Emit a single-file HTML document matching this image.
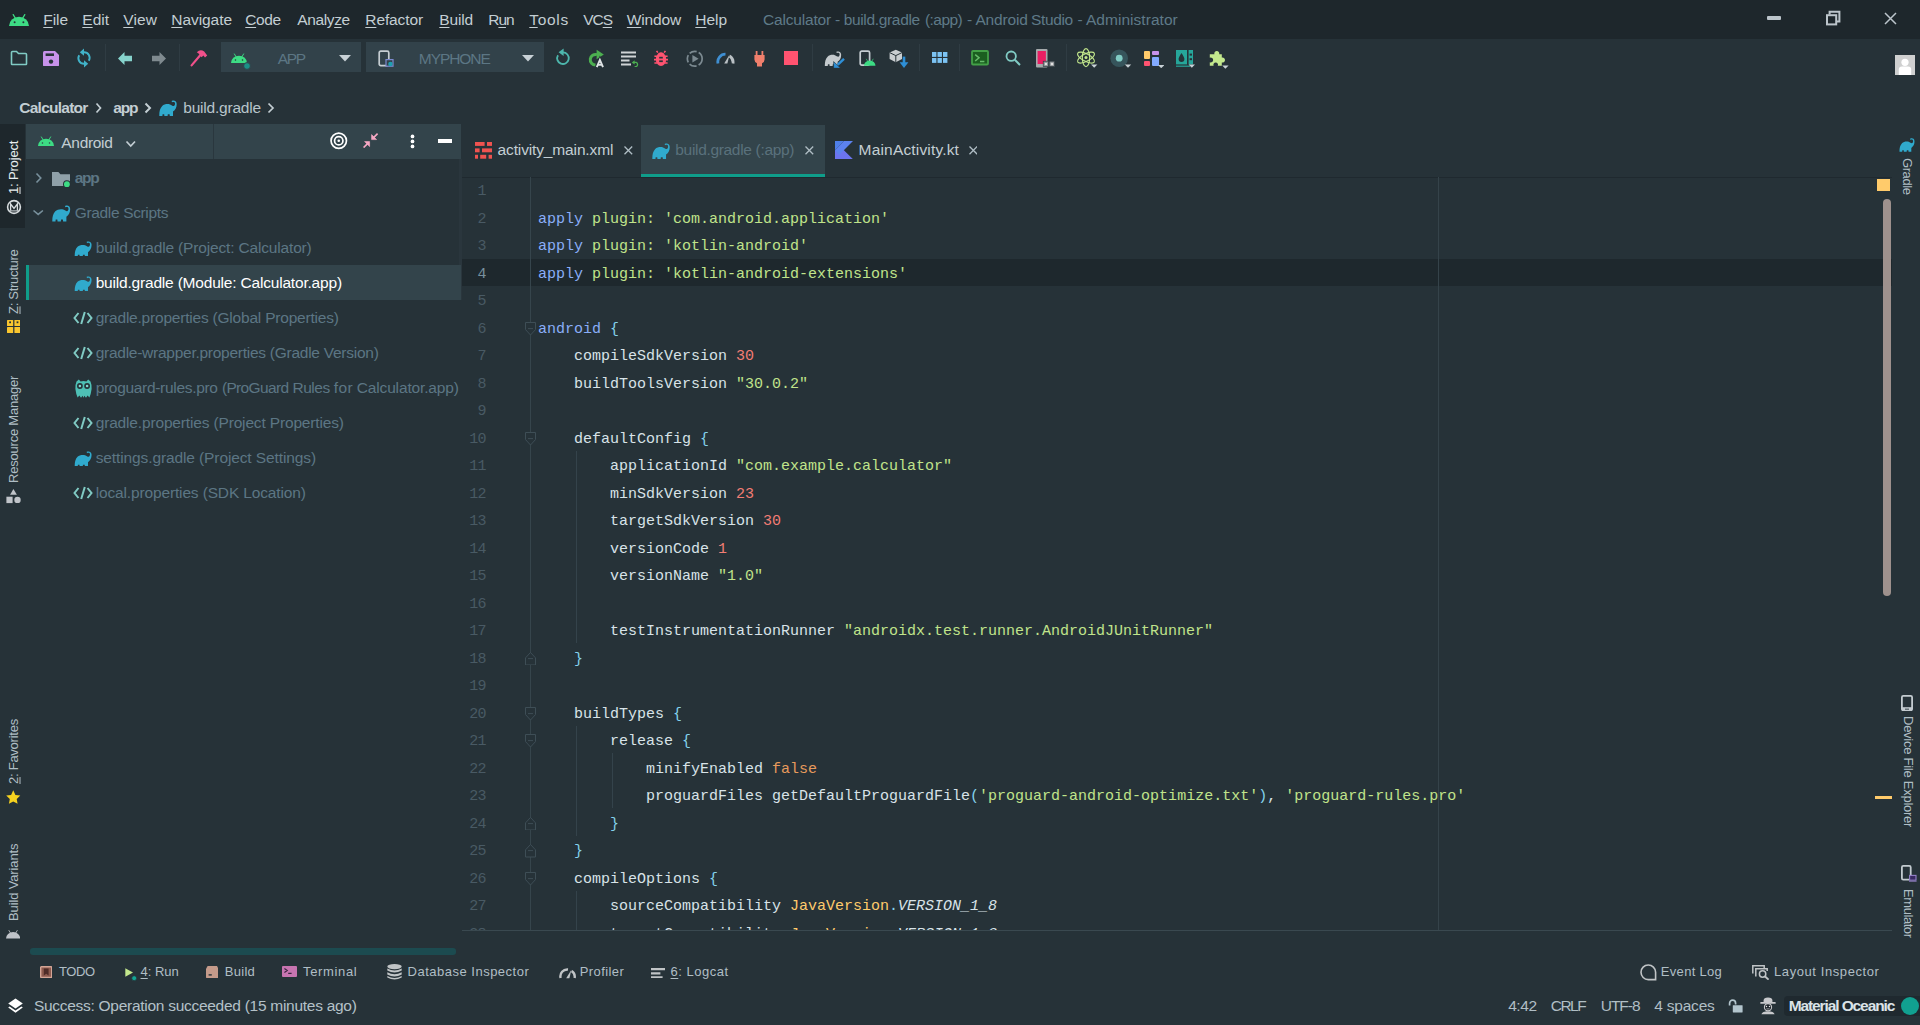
<!DOCTYPE html><html><head><meta charset="utf-8"><title>Calculator - build.gradle (:app) - Android Studio</title><style>
html,body{margin:0;padding:0}body{width:1920px;height:1025px;overflow:hidden;background:#263238;position:relative;font-family:"Liberation Sans",sans-serif}
#root{position:absolute;left:0;top:0;width:1920px;height:1025px;overflow:hidden}
#root>div,#root>svg,#root>span,.ed>div,.ed>span,.ed>svg{position:absolute}
.t{white-space:pre;display:block}
u{text-decoration:underline;text-underline-offset:1.5px;text-decoration-thickness:1px}
.ed{position:absolute;overflow:hidden}
</style></head><body><div id="root">
<div style="left:0px;top:0px;width:1920px;height:39px;background:#1e272c;"></div>
<div style="left:0px;top:124px;width:25px;height:104px;background:#1e272c;"></div>
<div style="left:26px;top:124px;width:435px;height:35px;background:#33444b;"></div>
<div style="left:213px;top:124px;width:1px;height:35px;background:#2a373e;"></div>
<div style="left:459px;top:159px;width:3px;height:141px;background:#2a363d;"></div>
<div style="left:27px;top:265px;width:434px;height:35px;background:#33444b;"></div>
<div style="left:26px;top:265px;width:3px;height:35px;background:#0f9d8a;"></div>
<div style="left:30px;top:948px;width:426px;height:7px;background:#1c4b50;border-radius:3px"></div>
<div style="left:221px;top:42px;width:140px;height:30px;background:#32424a;"></div>
<div style="left:366px;top:42px;width:178px;height:30px;background:#32424a;"></div>
<div style="left:641px;top:125px;width:184px;height:52px;background:#33444b;"></div>
<div style="left:641px;top:173.5px;width:184px;height:3.5px;background:#0f9d8a;"></div>
<div style="left:462px;top:176.5px;width:1430px;height:1px;background:#1f292f;"></div>
<div style="left:1783.5px;top:996.3px;width:137px;height:19.5px;background:#1f292f;border-radius:4px 0 0 4px"></div>
<div style="left:1901px;top:997px;width:18px;height:18px;background:#11a090;border-radius:50%"></div>
<div style="left:104.5px;top:44px;width:1px;height:27px;background:#2f3c43;"></div>
<div style="left:178.5px;top:44px;width:1px;height:27px;background:#2f3c43;"></div>
<div style="left:811.5px;top:44px;width:1px;height:27px;background:#2f3c43;"></div>
<div style="left:918.5px;top:44px;width:1px;height:27px;background:#2f3c43;"></div>
<div style="left:959px;top:44px;width:1px;height:27px;background:#2f3c43;"></div>
<div style="left:1065.5px;top:44px;width:1px;height:27px;background:#2f3c43;"></div>
<svg style="left:9px;top:14px" width="20" height="12" viewBox="0 0 20 12"><path d="M0 12 A10 9.2 0 0 1 20 12 Z" fill="#3ddc84"/><path d="M4.2 0.6 L6.6 4.6 M15.8 0.6 L13.4 4.6" stroke="#3ddc84" stroke-width="1.2" stroke-linecap="round"/><circle cx="5.6" cy="8.2" r="1" fill="#263238"/><circle cx="14.4" cy="8.2" r="1" fill="#263238"/></svg>
<div style="left:1767px;top:16px;width:14px;height:4px;background:#bcc5cb;border-radius:1px"></div>
<svg style="left:1825px;top:10px" width="16" height="16" viewBox="0 0 16 16"><path d="M4.6 4.6 V1.8 H14.4 V11.4 H11.6" fill="none" stroke="#bcc5cb" stroke-width="2"/><rect x="2" y="5.2" width="9.2" height="9.2" fill="none" stroke="#bcc5cb" stroke-width="2"/></svg>
<svg style="left:1884px;top:11.5px" width="13" height="13" viewBox="0 0 13 13"><path d="M1 1 L12 12 M12 1 L1 12" stroke="#bcc5cb" stroke-width="1.5"/></svg>
<div style="left:1895px;top:55px;width:20px;height:20px;background:#cfd0d0;"></div>
<svg style="left:1895px;top:55px" width="20" height="20" viewBox="0 0 20 20"><circle cx="10" cy="7.3" r="3.6" fill="#fff"/><path d="M3.8 20 V14.5 Q3.8 11.5 7 11.5 H13 Q16.2 11.5 16.2 14.5 V20 Z" fill="#fff"/></svg>
<svg style="left:10px;top:50px" width="18" height="16" viewBox="0 0 18 16"><path d="M1.5 14 V2.5 Q1.5 1.5 2.5 1.5 H6.5 L8.5 3.5 H15.5 Q16.5 3.5 16.5 4.5 V14 Q16.5 14.5 16 14.5 H2 Q1.5 14.5 1.5 14 Z" fill="none" stroke="#80cbc4" stroke-width="1.6"/></svg>
<svg style="left:43px;top:50.5px" width="16" height="15.5" viewBox="0 0 16 15.5"><path d="M0 1.5 Q0 0 1.5 0 H12 L16 4 V14 Q16 15.5 14.5 15.5 H1.5 Q0 15.5 0 14 Z" fill="#c792ea"/><rect x="2.6" y="2.4" width="8.4" height="2.6" fill="#263238"/><circle cx="8" cy="10.6" r="2.2" fill="#263238"/></svg>
<svg style="left:76px;top:48px" width="16" height="20" viewBox="0 0 16 20"><path d="M8 4.2 A5.6 5.6 0 0 1 12.8 12.7 M8 15.8 A5.6 5.6 0 0 1 3.2 7.3" fill="none" stroke="#41b3c9" stroke-width="1.9"/><path d="M8 0.6 V7.8 L3.8 4.2 Z M8 19.4 V12.2 L12.2 15.8 Z" fill="#41b3c9"/></svg>
<svg style="left:118px;top:51.5px" width="15" height="13" viewBox="0 0 15 13"><path d="M0 6.5 L6.5 0 V3.8 H14 V9.2 H6.5 V13 Z" fill="#86d3cc"/></svg>
<svg style="left:150.5px;top:51.5px" width="15" height="13" viewBox="0 0 15 13"><path d="M15 6.5 L8.5 0 V3.8 H1 V9.2 H8.5 V13 Z" fill="#7f8a8f"/></svg>
<svg style="left:190px;top:49px" width="18" height="18" viewBox="0 0 18 18"><path d="M1.6 16.4 L10.2 6.2" stroke="#f0508a" stroke-width="2.2" stroke-linecap="round"/><path d="M6.8 3.2 Q10.5 -0.2 14.2 2.6 L17.2 6.4 L15 8.4 L13.4 6.6 L11.6 8.2 L8.6 4.6 Z" fill="#f0508a"/></svg>
<svg style="left:231px;top:52.5px" width="16" height="10.5" viewBox="0 0 20 12"><path d="M0 12 A10 9.2 0 0 1 20 12 Z" fill="#3ddc84"/><path d="M4.2 0.6 L6.6 4.6 M15.8 0.6 L13.4 4.6" stroke="#3ddc84" stroke-width="1.2" stroke-linecap="round"/><circle cx="5.6" cy="8.2" r="1" fill="#263238"/><circle cx="14.4" cy="8.2" r="1" fill="#263238"/></svg>
<svg style="left:242.5px;top:62px" width="8" height="8" viewBox="0 0 8 8"><circle cx="4" cy="4" r="3.4" fill="#1c8f86" stroke="#32424a" stroke-width="1"/></svg>
<svg style="left:339px;top:55px" width="12" height="6.5" viewBox="0 0 12 6.5"><path d="M0 0 H12 L6.0 6.5 Z" fill="#c8d1d6"/></svg>
<svg style="left:378px;top:50px" width="16" height="18" viewBox="0 0 16 18"><rect x="1.2" y="1.2" width="9.6" height="14.4" rx="1.6" fill="none" stroke="#c5cdd2" stroke-width="1.7"/><rect x="8" y="9.6" width="7" height="6.6" fill="#32424a" stroke="#7d8bd0" stroke-width="1.2"/><circle cx="12.4" cy="14" r="2.2" fill="#1f9fb0"/></svg>
<svg style="left:522px;top:55px" width="12" height="6.5" viewBox="0 0 12 6.5"><path d="M0 0 H12 L6.0 6.5 Z" fill="#c8d1d6"/></svg>
<svg style="left:555px;top:48px" width="16" height="18" viewBox="0 0 16 18"><path d="M8 4.4 A5.8 5.8 0 1 1 3 7.2" fill="none" stroke="#4db6ac" stroke-width="1.8"/><path d="M8.6 0.6 V8 L3.6 4.3 Z" fill="#4db6ac"/></svg>
<svg style="left:587px;top:48.5px" width="18" height="19" viewBox="0 0 18 19"><path d="M10 5.6 A5.3 5.3 0 1 0 8.6 16" fill="none" stroke="#4caf50" stroke-width="3"/><path d="M9.6 0.8 L16.8 5.6 L9.6 10.2 Z" fill="#4caf50"/><path d="M9.8 18.2 L12.9 11 L16 18.2 M11 15.9 H14.8" fill="none" stroke="#263238" stroke-width="3.6"/><path d="M9.8 18.2 L12.9 11 L16 18.2 M11 15.9 H14.8" fill="none" stroke="#dfe4e6" stroke-width="1.9"/></svg>
<svg style="left:621px;top:51px" width="19" height="16" viewBox="0 0 19 16"><path d="M0 1.5 H15 M0 5.5 H15 M0 9.5 H8.5 M0 13.5 H10" stroke="#cfd3d5" stroke-width="2.2"/><path d="M12.4 11.4 H15.2 A2.3 2.3 0 0 1 15.2 15.6 H13.6" fill="none" stroke="#4caf50" stroke-width="1.3"/><path d="M13.6 9.2 L10.8 11.4 L13.6 13.6 Z" fill="#4caf50"/></svg>
<svg style="left:653px;top:50px" width="16" height="16.5" viewBox="0 0 16 16.5"><ellipse cx="8" cy="9.4" rx="5.2" ry="6.6" fill="#ff5370"/><path d="M4.2 4.4 Q8 0.2 11.8 4.4 Z" fill="#ff5370"/><path d="M1.4 6.2 H4 M12 6.2 H14.6 M1 9.6 H4 M12 9.6 H15 M1.4 13 H4 M12 13 H14.6 M4.8 2.6 L3.6 0.9 M11.2 2.6 L12.4 0.9" stroke="#ff5370" stroke-width="1.6"/><rect x="6.2" y="6.8" width="3.6" height="1.7" fill="#263238"/><rect x="6.2" y="10.4" width="3.6" height="1.7" fill="#263238"/></svg>
<svg style="left:685.5px;top:49.5px" width="17.5" height="17.5" viewBox="0 0 17.5 17.5"><circle cx="8.75" cy="8.75" r="7.4" fill="none" stroke="#7c8a91" stroke-width="1.7" stroke-dasharray="7.5 2.2"/><path d="M6.4 5 L12.6 8.75 L6.4 12.5 Z" fill="#7c8a91"/></svg>
<svg style="left:716px;top:51.5px" width="19" height="12" viewBox="0 0 19 12"><path d="M2 11.5 A7.6 7.6 0 0 1 9.5 2.2" fill="none" stroke="#3f8fd2" stroke-width="2.8"/><path d="M13.6 4 A7.6 7.6 0 0 1 17 11.5" fill="none" stroke="#b9c0c4" stroke-width="2.8"/><path d="M8.2 11.5 L13.6 2.4 L11.4 11.5 Z" fill="#b9c0c4"/></svg>
<svg style="left:753.5px;top:50.5px" width="11" height="16" viewBox="0 0 11 16"><path d="M2.6 0 V4.4 M8.4 0 V4.4" stroke="#f07f6c" stroke-width="1.8"/><path d="M0.4 4 H10.6 V8.6 Q10.6 11 8 12.2 V15.6 H3 V12.2 Q0.4 11 0.4 8.6 Z" fill="#f07f6c"/></svg>
<div style="left:784.3px;top:51.3px;width:13.8px;height:13.8px;background:#ff5370;"></div>
<svg style="left:823.5px;top:50.5px" width="18" height="15" viewBox="0 0 18 16"><path d="M0.3 16 C0.2 12 0.8 8.5 3.2 6 C5 4.2 8.5 3.6 11 4.4 C12.5 5 13.5 6 14.6 6 C15.6 6 16.2 4.6 16 3.2 C15.8 1.9 14.8 1.5 13 2.2 L12.6 0.9 C15 -0.2 17.2 0.6 17.6 3.2 C18 6.5 16.8 9.5 14 11.5 L14 16 L10.8 16 L10.6 14.2 L8.8 14.2 L8.6 16 L5.4 16 L5.2 14.2 L3.6 14.2 L3.4 16 Z" fill="#c4cacd"/></svg>
<svg style="left:832.5px;top:57.5px" width="12" height="10.5" viewBox="0 0 12 10.5"><path d="M11 0.8 L4.6 6.8" stroke="#2e8fd6" stroke-width="2.4"/><path d="M0.6 10.2 V3.6 L7.6 10.2 Z" fill="#2e8fd6" stroke="#263238" stroke-width="0.6"/></svg>
<svg style="left:858.5px;top:50px" width="17" height="18" viewBox="0 0 17 18"><rect x="1.2" y="1.2" width="9.4" height="14" rx="1.6" fill="none" stroke="#c5cdd2" stroke-width="1.7"/></svg>
<svg style="left:864px;top:58px" width="11.5" height="8.5" viewBox="0 0 20 12"><path d="M0 12 A10 9.2 0 0 1 20 12 Z" fill="#3ddc84"/><path d="M4.2 0.6 L6.6 4.6 M15.8 0.6 L13.4 4.6" stroke="#3ddc84" stroke-width="1.2" stroke-linecap="round"/><circle cx="5.6" cy="8.2" r="1" fill="#3ddc84"/><circle cx="14.4" cy="8.2" r="1" fill="#3ddc84"/></svg>
<svg style="left:888.5px;top:48.5px" width="20" height="20" viewBox="0 0 20 20"><path d="M6.8 0.8 L13 3.6 V10 L6.8 13.2 L0.6 10 V3.6 Z" fill="#c9ced1"/><path d="M0.6 3.6 L6.8 6.6 L13 3.6 M6.8 6.6 V13.2" fill="none" stroke="#263238" stroke-width="1"/><path d="M15 7.6 V14" stroke="#2e8fd6" stroke-width="2.6"/><path d="M10.6 13.2 H19.4 L15 19 Z" fill="#2e8fd6"/></svg>
<svg style="left:932px;top:52px" width="15.5" height="11" viewBox="0 0 15.5 11"><g fill="#7cc3f3"><rect x="0" y="0" width="4.4" height="4.9"/><rect x="5.5" y="0" width="4.4" height="4.9"/><rect x="11" y="0" width="4.4" height="4.9"/><rect x="0" y="6" width="4.4" height="4.9"/><rect x="5.5" y="6" width="4.4" height="4.9"/><rect x="11" y="6" width="4.4" height="4.9"/></g></svg>
<svg style="left:971px;top:50px" width="18" height="15.5" viewBox="0 0 18 15.5"><rect x="1" y="1" width="16" height="13.5" rx="1" fill="#1b5e20" stroke="#43a047" stroke-width="1.8"/><path d="M4.2 4.6 L8 7.8 L4.2 11 M9 11.4 H13.4" fill="none" stroke="#66bb6a" stroke-width="1.5"/></svg>
<svg style="left:1005px;top:50px" width="16" height="16" viewBox="0 0 16 16"><circle cx="6.2" cy="6.2" r="4.7" fill="none" stroke="#80cbc4" stroke-width="1.8"/><path d="M9.8 9.8 L15 15" stroke="#80cbc4" stroke-width="2"/></svg>
<svg style="left:1034.5px;top:47.5px" width="21" height="21" viewBox="0 0 21 21"><rect x="1" y="1" width="11.5" height="18.6" rx="1" fill="#a5a9ab"/><rect x="2.6" y="3" width="8.3" height="13" fill="#e91e63"/><rect x="8.2" y="13.2" width="5.4" height="5.4" fill="#8f9497" stroke="#263238" stroke-width="0.6"/><rect x="14.2" y="13.2" width="5.4" height="5.4" fill="#8f9497" stroke="#263238" stroke-width="0.6"/><circle cx="10.9" cy="16" r="1.2" fill="#e0e0e0"/><rect x="15.8" y="14.8" width="2.4" height="2.4" fill="#e0e0e0"/></svg>
<svg style="left:1076px;top:48px" width="22" height="20" viewBox="0 0 22 20"><g fill="none" stroke="#c3e88d" stroke-width="1.15"><ellipse cx="10" cy="9.6" rx="9.4" ry="3.7" transform="rotate(-28 10 9.6)"/><ellipse cx="10" cy="9.6" rx="9.4" ry="3.7" transform="rotate(28 10 9.6)"/><ellipse cx="10" cy="9.6" rx="3.7" ry="9" /></g><circle cx="10" cy="9.6" r="1.5" fill="#c3e88d"/><path d="M15 16.6 H21.4 L18.2 19.8 Z" fill="#c8d1d6"/></svg>
<svg style="left:1110px;top:49px" width="22" height="20" viewBox="0 0 22 20"><circle cx="9.2" cy="9.2" r="8.8" fill="#36545b"/><circle cx="9.2" cy="9.2" r="3.4" fill="#80cbc4"/><path d="M14.8 15.6 H21.2 L18 18.8 Z" fill="#c8d1d6"/></svg>
<div style="left:1143.8px;top:50.6px;width:6.6px;height:8.8px;background:#ffcb6b;border-radius:1px"></div>
<div style="left:1152.2px;top:50.6px;width:6.4px;height:4.6px;background:#c792ea;border-radius:1px"></div>
<div style="left:1143.8px;top:60.6px;width:6.6px;height:5.4px;background:#ff5370;border-radius:1px"></div>
<div style="left:1152.2px;top:57px;width:6.4px;height:9px;background:#82aaff;border-radius:1px"></div>
<svg style="left:1157.5px;top:64.6px" width="6.4" height="3.2" viewBox="0 0 6.4 3.2"><path d="M0 0 H6.4 L3.2 3.2 Z" fill="#c8d1d6"/></svg>
<svg style="left:1175.5px;top:50px" width="22" height="20" viewBox="0 0 22 20"><rect x="0" y="0" width="11" height="14.4" fill="#26a69a"/><rect x="12.6" y="0" width="4.4" height="14.4" fill="#26a69a"/><path d="M5.5 3 Q8.4 7.4 8.4 9 A2.9 2.9 0 0 1 2.6 9 Q2.6 7.4 5.5 3 Z" fill="#263238"/><rect x="13.6" y="3.6" width="2.4" height="2" fill="#263238"/><rect x="13.6" y="8.2" width="2.4" height="2" fill="#263238"/><path d="M0 16.2 H14" stroke="#26a69a" stroke-width="1.2"/><path d="M12.6 14.6 H19 L15.8 17.8 Z" fill="#c8d1d6"/></svg>
<svg style="left:1206.5px;top:48.5px" width="22" height="20" viewBox="0 0 22 20"><path d="M5 5.2 H7.4 A2.5 2.5 0 1 1 12.2 5.2 H14.8 V8.6 A2.5 2.5 0 1 1 14.8 13.4 V16.8 H10.8 A2.3 2.3 0 1 0 6.6 16.8 H2.8 V13.2 A2.4 2.4 0 1 0 2.8 8.8 V5.2 Z" fill="#c3e88d"/><path d="M15.2 16.6 H21.6 L18.4 19.8 Z" fill="#c8d1d6"/></svg>
<svg style="left:95px;top:102px" width="7.5" height="12" viewBox="0 0 7.5 12"><path d="M1.5 1.5 L5.5 6.0 L1.5 10.5" fill="none" stroke="#c3ced3" stroke-width="1.7"/></svg>
<svg style="left:143.5px;top:102px" width="8" height="12" viewBox="0 0 8 12"><path d="M1.5 1.5 L6 6.0 L1.5 10.5" fill="none" stroke="#c3ced3" stroke-width="2"/></svg>
<svg style="left:159.2px;top:100px" width="18" height="16.1" viewBox="0 0 18 16"><path d="M0.3 16 C0.2 12 0.8 8.5 3.2 6 C5 4.2 8.5 3.6 11 4.4 C12.5 5 13.5 6 14.6 6 C15.6 6 16.2 4.6 16 3.2 C15.8 1.9 14.8 1.5 13 2.2 L12.6 0.9 C15 -0.2 17.2 0.6 17.6 3.2 C18 6.5 16.8 9.5 14 11.5 L14 16 L10.8 16 L10.6 14.2 L8.8 14.2 L8.6 16 L5.4 16 L5.2 14.2 L3.6 14.2 L3.4 16 Z" fill="#30aacd"/></svg>
<svg style="left:266.5px;top:102px" width="8" height="12" viewBox="0 0 8 12"><path d="M1.5 1.5 L6 6.0 L1.5 10.5" fill="none" stroke="#c3ced3" stroke-width="1.7"/></svg>
<svg style="left:38px;top:135.7px" width="16" height="10.5" viewBox="0 0 20 12"><path d="M0 12 A10 9.2 0 0 1 20 12 Z" fill="#3ddc84"/><path d="M4.2 0.6 L6.6 4.6 M15.8 0.6 L13.4 4.6" stroke="#3ddc84" stroke-width="1.2" stroke-linecap="round"/><circle cx="5.6" cy="8.2" r="1" fill="#32424a"/><circle cx="14.4" cy="8.2" r="1" fill="#32424a"/></svg>
<svg style="left:124.5px;top:139.5px" width="11.5" height="8" viewBox="0 0 11.5 8"><path d="M1.5 1.5 L5.75 6 L10.0 1.5" fill="none" stroke="#c3ced3" stroke-width="1.7"/></svg>
<svg style="left:330px;top:132.2px" width="17.5" height="17.5" viewBox="0 0 17.5 17.5"><circle cx="8.75" cy="8.75" r="7.7" fill="none" stroke="#fff" stroke-width="1.7"/><circle cx="8.75" cy="8.75" r="4.2" fill="none" stroke="#fff" stroke-width="1.7"/><circle cx="8.75" cy="8.75" r="1.3" fill="#fff"/></svg>
<svg style="left:363.4px;top:133.2px" width="15.2" height="15.2" viewBox="0 0 15.2 15.2"><g fill="#f7a8c4" stroke="#f7a8c4"><path d="M14.6 0.6 L10.6 4.6" stroke-width="1.6" fill="none"/><path d="M8.6 1.6 V6.6 H13.6 Z" stroke-width="0.6"/><path d="M0.6 14.6 L4.6 10.6" stroke-width="1.6" fill="none"/><path d="M6.6 13.6 V8.6 H1.6 Z" stroke-width="0.6"/></g></svg>
<svg style="left:410.4px;top:133.6px" width="5" height="5" viewBox="0 0 5 5"><circle cx="2.5" cy="2.4" r="1.85" fill="#fff"/></svg>
<svg style="left:410.4px;top:138.65px" width="5" height="5" viewBox="0 0 5 5"><circle cx="2.5" cy="2.4" r="1.85" fill="#fff"/></svg>
<svg style="left:410.4px;top:143.7px" width="5" height="5" viewBox="0 0 5 5"><circle cx="2.5" cy="2.4" r="1.85" fill="#fff"/></svg>
<div style="left:438px;top:139.2px;width:14px;height:3.6px;background:#fff;"></div>
<svg style="left:34.8px;top:171.6px" width="7.8" height="12" viewBox="0 0 7.8 12"><path d="M1.5 1.5 L5.8 6.0 L1.5 10.5" fill="none" stroke="#78909c" stroke-width="1.6"/></svg>
<svg style="left:52px;top:171.5px" width="20" height="16" viewBox="0 0 20 16"><path d="M0 0 H6.4 L8.4 2.2 H18 V14 H0 Z" fill="#8fa0a8"/><circle cx="14.9" cy="12.2" r="3.9" fill="#263238"/><circle cx="14.9" cy="12.2" r="2.9" fill="#3ddc84"/></svg>
<svg style="left:32.3px;top:209px" width="12.4" height="7.4" viewBox="0 0 12.4 7.4"><path d="M1.5 1.5 L6.2 5.4 L10.9 1.5" fill="none" stroke="#78909c" stroke-width="1.6"/></svg>
<svg style="left:52px;top:205px" width="18.5" height="16.5" viewBox="0 0 18 16"><path d="M0.3 16 C0.2 12 0.8 8.5 3.2 6 C5 4.2 8.5 3.6 11 4.4 C12.5 5 13.5 6 14.6 6 C15.6 6 16.2 4.6 16 3.2 C15.8 1.9 14.8 1.5 13 2.2 L12.6 0.9 C15 -0.2 17.2 0.6 17.6 3.2 C18 6.5 16.8 9.5 14 11.5 L14 16 L10.8 16 L10.6 14.2 L8.8 14.2 L8.6 16 L5.4 16 L5.2 14.2 L3.6 14.2 L3.4 16 Z" fill="#30aacd"/></svg>
<svg style="left:73.6px;top:240.5px" width="18.3" height="15.5" viewBox="0 0 18 16"><path d="M0.3 16 C0.2 12 0.8 8.5 3.2 6 C5 4.2 8.5 3.6 11 4.4 C12.5 5 13.5 6 14.6 6 C15.6 6 16.2 4.6 16 3.2 C15.8 1.9 14.8 1.5 13 2.2 L12.6 0.9 C15 -0.2 17.2 0.6 17.6 3.2 C18 6.5 16.8 9.5 14 11.5 L14 16 L10.8 16 L10.6 14.2 L8.8 14.2 L8.6 16 L5.4 16 L5.2 14.2 L3.6 14.2 L3.4 16 Z" fill="#30aacd"/></svg>
<svg style="left:73.6px;top:275.5px" width="18.3" height="15.5" viewBox="0 0 18 16"><path d="M0.3 16 C0.2 12 0.8 8.5 3.2 6 C5 4.2 8.5 3.6 11 4.4 C12.5 5 13.5 6 14.6 6 C15.6 6 16.2 4.6 16 3.2 C15.8 1.9 14.8 1.5 13 2.2 L12.6 0.9 C15 -0.2 17.2 0.6 17.6 3.2 C18 6.5 16.8 9.5 14 11.5 L14 16 L10.8 16 L10.6 14.2 L8.8 14.2 L8.6 16 L5.4 16 L5.2 14.2 L3.6 14.2 L3.4 16 Z" fill="#30aacd"/></svg>
<svg style="left:73.6px;top:450.5px" width="18.3" height="15.5" viewBox="0 0 18 16"><path d="M0.3 16 C0.2 12 0.8 8.5 3.2 6 C5 4.2 8.5 3.6 11 4.4 C12.5 5 13.5 6 14.6 6 C15.6 6 16.2 4.6 16 3.2 C15.8 1.9 14.8 1.5 13 2.2 L12.6 0.9 C15 -0.2 17.2 0.6 17.6 3.2 C18 6.5 16.8 9.5 14 11.5 L14 16 L10.8 16 L10.6 14.2 L8.8 14.2 L8.6 16 L5.4 16 L5.2 14.2 L3.6 14.2 L3.4 16 Z" fill="#30aacd"/></svg>
<svg style="left:72.6px;top:311px" width="20" height="14" viewBox="0 0 20 14"><path d="M5.5 2 L1.5 7 L5.5 12 M14.5 2 L18.5 7 L14.5 12 M11.8 1 L8.2 13" fill="none" stroke="#80cbc4" stroke-width="2"/></svg>
<svg style="left:72.6px;top:346px" width="20" height="14" viewBox="0 0 20 14"><path d="M5.5 2 L1.5 7 L5.5 12 M14.5 2 L18.5 7 L14.5 12 M11.8 1 L8.2 13" fill="none" stroke="#80cbc4" stroke-width="2"/></svg>
<svg style="left:72.6px;top:416px" width="20" height="14" viewBox="0 0 20 14"><path d="M5.5 2 L1.5 7 L5.5 12 M14.5 2 L18.5 7 L14.5 12 M11.8 1 L8.2 13" fill="none" stroke="#80cbc4" stroke-width="2"/></svg>
<svg style="left:72.6px;top:486px" width="20" height="14" viewBox="0 0 20 14"><path d="M5.5 2 L1.5 7 L5.5 12 M14.5 2 L18.5 7 L14.5 12 M11.8 1 L8.2 13" fill="none" stroke="#80cbc4" stroke-width="2"/></svg>
<svg style="left:74.8px;top:378.5px" width="17" height="19" viewBox="0 0 17 19"><path d="M1.5 2.5 L3.8 0.6 L5.6 2.4 Q8.5 1.6 11.4 2.4 L13.2 0.6 L15.5 2.5 Q17 6 16.6 10 Q16 15 14.4 18.6 L12.6 16.6 L11 18.8 L9.4 16.8 L8.5 18.8 L7.6 16.8 L6 18.8 L4.4 16.6 L2.6 18.6 Q1 15 0.4 10 Q0 6 1.5 2.5 Z" fill="#4ec0b5"/><circle cx="4.9" cy="7" r="2.9" fill="#263238"/><circle cx="12.1" cy="7" r="2.9" fill="#263238"/><circle cx="4.9" cy="7" r="1.3" fill="#7fd6cd"/><circle cx="12.1" cy="7" r="1.3" fill="#7fd6cd"/></svg>
<svg style="left:474.5px;top:141.6px" width="17" height="17" viewBox="0 0 17 17"><g fill="#ef5350"><rect x="0" y="0" width="9.6" height="3.9"/><rect x="12" y="0" width="5" height="3.9"/><rect x="0" y="6.4" width="4.6" height="3.9"/><rect x="7" y="6.4" width="10" height="3.9"/><rect x="0" y="12.8" width="3" height="3.9"/><rect x="5.2" y="12.8" width="6" height="3.9"/><rect x="13.6" y="12.8" width="3.4" height="3.9"/></g></svg>
<svg style="left:624px;top:146px" width="8.7" height="8.7" viewBox="0 0 8.7 8.7"><path d="M0.5 0.5 L8.2 8.2 M8.2 0.5 L0.5 8.2" stroke="#b0bec5" stroke-width="1.3"/></svg>
<svg style="left:651.9px;top:142.5px" width="18.1" height="16" viewBox="0 0 18 16"><path d="M0.3 16 C0.2 12 0.8 8.5 3.2 6 C5 4.2 8.5 3.6 11 4.4 C12.5 5 13.5 6 14.6 6 C15.6 6 16.2 4.6 16 3.2 C15.8 1.9 14.8 1.5 13 2.2 L12.6 0.9 C15 -0.2 17.2 0.6 17.6 3.2 C18 6.5 16.8 9.5 14 11.5 L14 16 L10.8 16 L10.6 14.2 L8.8 14.2 L8.6 16 L5.4 16 L5.2 14.2 L3.6 14.2 L3.4 16 Z" fill="#30aacd"/></svg>
<svg style="left:805.3px;top:146px" width="8.7" height="8.7" viewBox="0 0 8.7 8.7"><path d="M0.5 0.5 L8.2 8.2 M8.2 0.5 L0.5 8.2" stroke="#b0bec5" stroke-width="1.3"/></svg>
<svg style="left:835px;top:140.7px" width="18" height="18.3" viewBox="0 0 18 18.3"><path d="M0 0 H9 L0 9.2 Z" fill="#4f7fe8"/><path d="M9 0 H18 L8.8 9.2 L18 18.3 H0 V9.2 Z" fill="#5c82ee"/><path d="M0 9.2 L0 18.3 H18 L8.8 9.2 L4 14 Z" fill="#7a6af0" opacity="0.55"/></svg>
<svg style="left:968.5px;top:146px" width="8.7" height="8.7" viewBox="0 0 8.7 8.7"><path d="M0.5 0.5 L8.2 8.2 M8.2 0.5 L0.5 8.2" stroke="#b0bec5" stroke-width="1.3"/></svg>
<svg style="left:5.7px;top:199.4px" width="16" height="16" viewBox="0 0 16 16"><circle cx="8" cy="8" r="7.2" fill="#d8dde0"/><circle cx="8" cy="8" r="5.6" fill="#1e272c"/><path d="M4.6 11.4 V5 L8 9.4 L11.4 5 V11.4" fill="none" stroke="#d8dde0" stroke-width="1.3"/><path d="M3.6 11.9 H12.4" stroke="#d8dde0" stroke-width="1"/></svg>
<svg style="left:6.6px;top:320px" width="13.6" height="13" viewBox="0 0 13.6 13"><g fill="#f9c62e"><rect x="0" y="0" width="6.2" height="6" rx="0.6"/><rect x="7.4" y="0" width="6.2" height="6" rx="0.6"/><rect x="0" y="7" width="6.2" height="6" rx="0.6"/><rect x="7.4" y="7" width="6.2" height="6" rx="0.6"/></g><g fill="#263238"><rect x="2.2" y="1.4" width="1.8" height="1.8"/><rect x="9.6" y="1.4" width="1.8" height="1.8"/></g></svg>
<svg style="left:5.6px;top:489px" width="15" height="15" viewBox="0 0 15 15"><path d="M7.4 0.1 L10.9 5.8 H4.1 Z" fill="#c0c4c9"/><rect x="0.4" y="7.7" width="6.2" height="6.4" fill="#c0c4c9"/><circle cx="11.5" cy="10.9" r="3.2" fill="#c0c4c9"/></svg>
<svg style="left:6px;top:790.3px" width="14.5" height="14" viewBox="0 0 14.5 14"><path d="M7.25 0.3 L9.4 4.9 L14.3 5.5 L10.7 8.9 L11.6 13.8 L7.25 11.4 L2.9 13.8 L3.8 8.9 L0.2 5.5 L5.1 4.9 Z" fill="#f6d21f"/></svg>
<svg style="left:6px;top:928.6px" width="14.2" height="10.7" viewBox="0 0 20 12"><path d="M0 12 A10 9.2 0 0 1 20 12 Z" fill="#c0c4c9"/><path d="M4.2 0.6 L6.6 4.6 M15.8 0.6 L13.4 4.6" stroke="#c0c4c9" stroke-width="1.2" stroke-linecap="round"/><circle cx="5.6" cy="8.2" r="1" fill="#c0c4c9"/><circle cx="14.4" cy="8.2" r="1" fill="#c0c4c9"/></svg>
<svg style="left:1899px;top:138px" width="16" height="13.8" viewBox="0 0 18 16"><path d="M0.3 16 C0.2 12 0.8 8.5 3.2 6 C5 4.2 8.5 3.6 11 4.4 C12.5 5 13.5 6 14.6 6 C15.6 6 16.2 4.6 16 3.2 C15.8 1.9 14.8 1.5 13 2.2 L12.6 0.9 C15 -0.2 17.2 0.6 17.6 3.2 C18 6.5 16.8 9.5 14 11.5 L14 16 L10.8 16 L10.6 14.2 L8.8 14.2 L8.6 16 L5.4 16 L5.2 14.2 L3.6 14.2 L3.4 16 Z" fill="#30aacd"/></svg>
<svg style="left:1901px;top:694.8px" width="12" height="16.4" viewBox="0 0 12 16.4"><rect x="0.9" y="0.9" width="10.2" height="14.4" rx="1.4" fill="none" stroke="#c3cbd0" stroke-width="1.8"/><rect x="1" y="12.2" width="10" height="3.6" fill="#c3cbd0"/><rect x="4" y="13.7" width="4" height="0.9" fill="#263238"/></svg>
<svg style="left:1900.8px;top:864.5px" width="16" height="17.5" viewBox="0 0 16 17.5"><rect x="0.9" y="0.9" width="8.8" height="13.8" rx="1.4" fill="none" stroke="#c3cbd0" stroke-width="1.8"/><rect x="8" y="10" width="7.4" height="5.6" fill="#263238"/><rect x="8.6" y="10.4" width="6.4" height="4.8" fill="#3a2a63" stroke="#9583c9" stroke-width="1.1"/><path d="M8 16.8 H15.6" stroke="#9583c9" stroke-width="0.9"/></svg>
<svg style="left:39.8px;top:965.7px" width="12.4" height="12.2" viewBox="0 0 12.4 12.2"><rect x="0.7" y="0.7" width="11" height="10.8" rx="0.6" fill="#8d5b4f" stroke="#d3a596" stroke-width="1.4"/><path d="M3.8 2.6 H8.6 V9.4 L6.2 7.8 L3.8 9.4 Z" fill="#4e2c28"/></svg>
<svg style="left:124.6px;top:967.6px" width="13" height="13" viewBox="0 0 13 13"><path d="M0.3 0.3 L8 4.5 L0.3 8.7 Z" fill="#c3e88d"/><circle cx="9.2" cy="10.2" r="2.5" fill="#12a594" stroke="#263238" stroke-width="0.8"/></svg>
<svg style="left:205.7px;top:965.8px" width="12.6" height="12.4" viewBox="0 0 12.6 12.4"><path d="M0 3 L1.6 0 H11 L12.6 3 V11 Q12.6 12.4 11.2 12.4 H1.4 Q0 12.4 0 11 Z" fill="#c49a8a"/><rect x="2.6" y="8.2" width="3.2" height="1.4" fill="#263238"/></svg>
<svg style="left:281.7px;top:965.8px" width="15" height="11" viewBox="0 0 15 11"><rect width="15" height="11" rx="1" fill="#c774b0"/><path d="M2.4 2.6 L5.2 4.6 L2.4 6.6 M6.2 7.4 H9.6" fill="none" stroke="#3b2340" stroke-width="1.2"/></svg>
<svg style="left:387px;top:964px" width="15" height="16" viewBox="0 0 15 16"><g fill="#c0c4c6"><ellipse cx="7.5" cy="2.6" rx="7.2" ry="2.6"/><path d="M0.3 4.4 Q7.5 8.4 14.7 4.4 V6.6 Q7.5 10.6 0.3 6.6 Z"/><path d="M0.3 8.2 Q7.5 12.2 14.7 8.2 V10.4 Q7.5 14.4 0.3 10.4 Z"/><path d="M0.3 12 Q7.5 16 14.7 12 V13.4 Q7.5 17.6 0.3 13.4 Z"/></g></svg>
<svg style="left:558.7px;top:968px" width="17" height="10.5" viewBox="0 0 17 10.5"><path d="M1.6 10 A6.9 6.9 0 0 1 9 1.5" fill="none" stroke="#c0c4c6" stroke-width="2.4"/><path d="M12.6 3 A6.9 6.9 0 0 1 15.6 10" fill="none" stroke="#c0c4c6" stroke-width="2.4"/><path d="M7.2 10.2 L12.4 1.8 L10.4 10.2 Z" fill="#c0c4c6"/></svg>
<svg style="left:650.8px;top:967.5px" width="14.4" height="10.6" viewBox="0 0 14.4 10.6"><path d="M0 1.2 H14.4 M0 5.3 H9.4 M0 9.4 H11.6" stroke="#c0c4c6" stroke-width="2.3"/></svg>
<svg style="left:1640px;top:963.8px" width="17" height="17" viewBox="0 0 17 17"><path d="M15.6 15.6 V8.2 A7.3 7.3 0 1 0 8.3 15.6 Z" fill="none" stroke="#c0c4c6" stroke-width="1.6"/></svg>
<svg style="left:1751.5px;top:964.5px" width="18" height="15" viewBox="0 0 18 15"><path d="M0.8 8.4 V0.8 H12.2 V3" fill="none" stroke="#c0c4c6" stroke-width="1.5"/><path d="M3.8 11.4 V3.8 H15.2 V6" fill="none" stroke="#c0c4c6" stroke-width="1.5"/><circle cx="10.6" cy="9" r="3.2" fill="none" stroke="#c0c4c6" stroke-width="1.5"/><path d="M12.8 11.2 L16.6 14.6" stroke="#c0c4c6" stroke-width="1.9"/></svg>
<svg style="left:7.5px;top:998.3px" width="15" height="15" viewBox="0 0 15 15"><path d="M7.5 0.4 L14.8 5.4 L7.5 10.4 L0.2 5.4 Z" fill="#fff"/><path d="M1.6 8.4 L7.5 12.6 L13.4 8.4 L14.8 9.5 L7.5 14.7 L0.2 9.5 Z" fill="#fff"/></svg>
<svg style="left:1728.4px;top:998.6px" width="15" height="14" viewBox="0 0 15 14"><path d="M1.6 6.4 V4.2 A3 3 0 0 1 7.6 4.2 V5.4" fill="none" stroke="#b3c5cd" stroke-width="1.7"/><rect x="4.8" y="6.2" width="9.8" height="7.2" rx="0.4" fill="#b3c5cd"/></svg>
<svg style="left:1760px;top:997px" width="16" height="17.5" viewBox="0 0 16 17.5"><path d="M3.6 5.2 V3.4 Q3.6 0.4 8 0.4 Q12.4 0.4 12.4 3.4 V5.2 Z" fill="#c8c9cc"/><rect x="0.3" y="5" width="15.4" height="1.8" rx="0.6" fill="#c8c9cc"/><circle cx="8" cy="10.2" r="3.6" fill="#1d242a" stroke="#c8c9cc" stroke-width="1.1"/><circle cx="6.5" cy="9.6" r="0.75" fill="#e6e6e8"/><circle cx="9.5" cy="9.6" r="0.75" fill="#e6e6e8"/><path d="M6.4 11.9 H9.6" stroke="#c8c9cc" stroke-width="0.8"/><path d="M1.4 17.2 Q2.2 14.2 8 14.2 Q13.8 14.2 14.6 17.2 Z" fill="#c8c9cc"/></svg>
<span id="t0" class="t" style="left:43.30px;top:11.88px;font:400 15.5px/15.5px 'Liberation Sans', sans-serif;color:#c3ced3;letter-spacing:-0.081px;"><u>F</u>ile</span>
<span id="t1" class="t" style="left:82.30px;top:11.88px;font:400 15.5px/15.5px 'Liberation Sans', sans-serif;color:#c3ced3;letter-spacing:-0.005px;"><u>E</u>dit</span>
<span id="t2" class="t" style="left:123.30px;top:11.88px;font:400 15.5px/15.5px 'Liberation Sans', sans-serif;color:#c3ced3;letter-spacing:0.106px;"><u>V</u>iew</span>
<span id="t3" class="t" style="left:171.30px;top:11.88px;font:400 15.5px/15.5px 'Liberation Sans', sans-serif;color:#c3ced3;letter-spacing:-0.065px;"><u>N</u>avigate</span>
<span id="t4" class="t" style="left:245.30px;top:11.88px;font:400 15.5px/15.5px 'Liberation Sans', sans-serif;color:#c3ced3;letter-spacing:-0.394px;"><u>C</u>ode</span>
<span id="t5" class="t" style="left:297.30px;top:11.88px;font:400 15.5px/15.5px 'Liberation Sans', sans-serif;color:#c3ced3;letter-spacing:-0.378px;">Analy<u>z</u>e</span>
<span id="t6" class="t" style="left:365.30px;top:11.88px;font:400 15.5px/15.5px 'Liberation Sans', sans-serif;color:#c3ced3;letter-spacing:-0.119px;"><u>R</u>efactor</span>
<span id="t7" class="t" style="left:439.30px;top:11.88px;font:400 15.5px/15.5px 'Liberation Sans', sans-serif;color:#c3ced3;letter-spacing:-0.174px;"><u>B</u>uild</span>
<span id="t8" class="t" style="left:488.30px;top:11.88px;font:400 15.5px/15.5px 'Liberation Sans', sans-serif;color:#c3ced3;letter-spacing:-1.101px;">R<u>u</u>n</span>
<span id="t9" class="t" style="left:529.30px;top:11.88px;font:400 15.5px/15.5px 'Liberation Sans', sans-serif;color:#c3ced3;letter-spacing:0.669px;"><u>T</u>ools</span>
<span id="t10" class="t" style="left:583.30px;top:11.88px;font:400 15.5px/15.5px 'Liberation Sans', sans-serif;color:#c3ced3;letter-spacing:-1.076px;">VC<u>S</u></span>
<span id="t11" class="t" style="left:626.80px;top:11.88px;font:400 15.5px/15.5px 'Liberation Sans', sans-serif;color:#c3ced3;letter-spacing:-0.171px;"><u>W</u>indow</span>
<span id="t12" class="t" style="left:695.30px;top:11.88px;font:400 15.5px/15.5px 'Liberation Sans', sans-serif;color:#c3ced3;letter-spacing:-0.054px;"><u>H</u>elp</span>
<span id="t13" class="t" style="left:763.00px;top:11.88px;font:400 15.5px/15.5px 'Liberation Sans', sans-serif;color:#5f7a88;letter-spacing:-0.177px;">Calculator</span>
<span id="t14" class="t" style="left:835.00px;top:11.88px;font:400 15.5px/15.5px 'Liberation Sans', sans-serif;color:#5f7a88;letter-spacing:0.128px;">-</span>
<span id="t15" class="t" style="left:843.70px;top:11.88px;font:400 15.5px/15.5px 'Liberation Sans', sans-serif;color:#5f7a88;letter-spacing:-0.335px;">build.gradle</span>
<span id="t16" class="t" style="left:925.00px;top:11.88px;font:400 15.5px/15.5px 'Liberation Sans', sans-serif;color:#5f7a88;letter-spacing:-0.564px;">(:app)</span>
<span id="t17" class="t" style="left:967.00px;top:11.88px;font:400 15.5px/15.5px 'Liberation Sans', sans-serif;color:#5f7a88;letter-spacing:-0.372px;">-</span>
<span id="t18" class="t" style="left:975.40px;top:11.88px;font:400 15.5px/15.5px 'Liberation Sans', sans-serif;color:#5f7a88;letter-spacing:-0.175px;">Android</span>
<span id="t19" class="t" style="left:1030.90px;top:11.88px;font:400 15.5px/15.5px 'Liberation Sans', sans-serif;color:#5f7a88;letter-spacing:-0.319px;">Studio</span>
<span id="t20" class="t" style="left:1077.40px;top:11.88px;font:400 15.5px/15.5px 'Liberation Sans', sans-serif;color:#5f7a88;letter-spacing:-0.372px;">-</span>
<span id="t21" class="t" style="left:1085.90px;top:11.88px;font:400 15.5px/15.5px 'Liberation Sans', sans-serif;color:#5f7a88;letter-spacing:0.047px;">Administrator</span>
<span id="t22" class="t" style="left:277.80px;top:50.63px;font:400 15.5px/15.5px 'Liberation Sans', sans-serif;color:#5c7684;letter-spacing:-1.326px;">APP</span>
<span id="t23" class="t" style="left:418.80px;top:50.63px;font:400 15.5px/15.5px 'Liberation Sans', sans-serif;color:#5c7684;letter-spacing:-1.065px;">MYPHONE</span>
<span id="t24" class="t" style="left:19.30px;top:99.88px;font:700 15.5px/15.5px 'Liberation Sans', sans-serif;color:#c3ced3;letter-spacing:-0.749px;">Calculator</span>
<span id="t25" class="t" style="left:113.30px;top:99.88px;font:700 15.5px/15.5px 'Liberation Sans', sans-serif;color:#c3ced3;letter-spacing:-1.145px;">app</span>
<span id="t26" class="t" style="left:183.30px;top:99.88px;font:400 15.5px/15.5px 'Liberation Sans', sans-serif;color:#b8c5cb;letter-spacing:-0.214px;">build.gradle</span>
<span id="t27" class="t" style="left:61.30px;top:134.88px;font:400 15.5px/15.5px 'Liberation Sans', sans-serif;color:#c3ced3;letter-spacing:-0.313px;">Android</span>
<span id="t28" class="t" style="left:74.70px;top:170.38px;font:700 15.5px/15.5px 'Liberation Sans', sans-serif;color:#5c7684;letter-spacing:-1.305px;">app</span>
<span id="t29" class="t" style="left:74.70px;top:205.38px;font:400 15.5px/15.5px 'Liberation Sans', sans-serif;color:#5c7684;letter-spacing:-0.341px;">Gradle Scripts</span>
<span id="t30" class="t" style="left:95.70px;top:240.38px;font:400 15.5px/15.5px 'Liberation Sans', sans-serif;color:#5c7684;letter-spacing:-0.161px;">build.gradle (Project: Calculator)</span>
<span id="t31" class="t" style="left:95.70px;top:275.38px;font:400 15.5px/15.5px 'Liberation Sans', sans-serif;color:#ffffff;letter-spacing:-0.193px;">build.gradle (Module: Calculator.app)</span>
<span id="t32" class="t" style="left:95.70px;top:310.38px;font:400 15.5px/15.5px 'Liberation Sans', sans-serif;color:#5c7684;letter-spacing:-0.208px;">gradle.properties (Global Properties)</span>
<span id="t33" class="t" style="left:95.70px;top:345.38px;font:400 15.5px/15.5px 'Liberation Sans', sans-serif;color:#5c7684;letter-spacing:-0.260px;">gradle-wrapper.properties (Gradle Version)</span>
<span id="t34" class="t" style="left:95.70px;top:380.38px;font:400 15.5px/15.5px 'Liberation Sans', sans-serif;color:#5c7684;letter-spacing:-0.309px;">proguard-rules.pro</span>
<span id="t35" class="t" style="left:221.90px;top:380.38px;font:400 15.5px/15.5px 'Liberation Sans', sans-serif;color:#5c7684;letter-spacing:-0.644px;">(ProGuard</span>
<span id="t36" class="t" style="left:292.40px;top:380.38px;font:400 15.5px/15.5px 'Liberation Sans', sans-serif;color:#5c7684;letter-spacing:-0.453px;">Rules</span>
<span id="t37" class="t" style="left:333.80px;top:380.38px;font:400 15.5px/15.5px 'Liberation Sans', sans-serif;color:#5c7684;letter-spacing:0.363px;">for</span>
<span id="t38" class="t" style="left:356.70px;top:380.38px;font:400 15.5px/15.5px 'Liberation Sans', sans-serif;color:#5c7684;letter-spacing:-0.142px;">Calculator.app)</span>
<span id="t39" class="t" style="left:95.70px;top:415.38px;font:400 15.5px/15.5px 'Liberation Sans', sans-serif;color:#5c7684;letter-spacing:-0.158px;">gradle.properties (Project Properties)</span>
<span id="t40" class="t" style="left:95.70px;top:450.38px;font:400 15.5px/15.5px 'Liberation Sans', sans-serif;color:#5c7684;letter-spacing:-0.110px;">settings.gradle (Project Settings)</span>
<span id="t41" class="t" style="left:95.70px;top:485.38px;font:400 15.5px/15.5px 'Liberation Sans', sans-serif;color:#5c7684;letter-spacing:-0.145px;">local.properties (SDK Location)</span>
<span id="t42" class="t" style="left:497.60px;top:142.38px;font:400 15.5px/15.5px 'Liberation Sans', sans-serif;color:#c3ced3;letter-spacing:-0.139px;">activity_main.xml</span>
<span id="t43" class="t" style="left:675.30px;top:142.38px;font:400 15.5px/15.5px 'Liberation Sans', sans-serif;color:#5a717c;letter-spacing:-0.322px;">build.gradle (:app)</span>
<span id="t44" class="t" style="left:858.60px;top:142.38px;font:400 15.5px/15.5px 'Liberation Sans', sans-serif;color:#c3ced3;letter-spacing:0.172px;">MainActivity.kt</span>
<span id="t45" class="t" style="left:58.90px;top:965.00px;font:400 13px/13px 'Liberation Sans', sans-serif;color:#b0bec5;letter-spacing:-0.351px;">TODO</span>
<span id="t46" class="t" style="left:140.55px;top:965.00px;font:400 13px/13px 'Liberation Sans', sans-serif;color:#b0bec5;letter-spacing:-0.020px;"><u>4</u>: Run</span>
<span id="t47" class="t" style="left:224.70px;top:965.00px;font:400 13px/13px 'Liberation Sans', sans-serif;color:#b0bec5;letter-spacing:0.306px;">Build</span>
<span id="t48" class="t" style="left:303.05px;top:965.00px;font:400 13px/13px 'Liberation Sans', sans-serif;color:#b0bec5;letter-spacing:0.643px;">Terminal</span>
<span id="t49" class="t" style="left:407.60px;top:965.00px;font:400 13px/13px 'Liberation Sans', sans-serif;color:#b0bec5;letter-spacing:0.495px;">Database Inspector</span>
<span id="t50" class="t" style="left:579.70px;top:965.00px;font:400 13px/13px 'Liberation Sans', sans-serif;color:#b0bec5;letter-spacing:0.415px;">Profiler</span>
<span id="t51" class="t" style="left:670.55px;top:965.00px;font:400 13px/13px 'Liberation Sans', sans-serif;color:#b0bec5;letter-spacing:0.500px;"><u>6</u>: Logcat</span>
<span id="t52" class="t" style="left:1660.80px;top:965.00px;font:400 13px/13px 'Liberation Sans', sans-serif;color:#b0bec5;letter-spacing:0.312px;">Event Log</span>
<span id="t53" class="t" style="left:1774.00px;top:965.00px;font:400 13px/13px 'Liberation Sans', sans-serif;color:#b0bec5;letter-spacing:0.585px;">Layout Inspector</span>
<span id="t54" class="t" style="left:33.90px;top:997.88px;font:400 15.5px/15.5px 'Liberation Sans', sans-serif;color:#b4c1c8;letter-spacing:-0.278px;">Success: Operation succeeded (15 minutes ago)</span>
<span id="t55" class="t" style="left:1508.20px;top:997.88px;font:400 15.5px/15.5px 'Liberation Sans', sans-serif;color:#b0bec5;letter-spacing:-0.449px;">4:42</span>
<span id="t56" class="t" style="left:1550.80px;top:997.88px;font:400 15.5px/15.5px 'Liberation Sans', sans-serif;color:#b0bec5;letter-spacing:-1.538px;">CRLF</span>
<span id="t57" class="t" style="left:1600.80px;top:997.88px;font:400 15.5px/15.5px 'Liberation Sans', sans-serif;color:#b0bec5;letter-spacing:-1.049px;">UTF-8</span>
<span id="t58" class="t" style="left:1654.30px;top:997.88px;font:400 15.5px/15.5px 'Liberation Sans', sans-serif;color:#b0bec5;letter-spacing:-0.220px;">4 spaces</span>
<span id="t59" class="t" style="left:1788.70px;top:997.88px;font:700 15.5px/15.5px 'Liberation Sans', sans-serif;color:#dbe3e7;letter-spacing:-1.103px;">Material Oceanic</span>
<span id="v0" class="t" style="left:12.9px;top:194.1px;font:400 13px/13px 'Liberation Sans', sans-serif;color:#e8eef0;transform-origin:0 0;transform:rotate(-90deg) translateY(-50%);letter-spacing:-0.171px;"><u>1</u>: Project</span>
<span id="v1" class="t" style="left:12.9px;top:314px;font:400 13px/13px 'Liberation Sans', sans-serif;color:#b0bec5;transform-origin:0 0;transform:rotate(-90deg) translateY(-50%);letter-spacing:-0.289px;"><u>Z</u>: Structure</span>
<span id="v2" class="t" style="left:12.9px;top:483px;font:400 13px/13px 'Liberation Sans', sans-serif;color:#b0bec5;transform-origin:0 0;transform:rotate(-90deg) translateY(-50%);letter-spacing:-0.210px;">Resource Manager</span>
<span id="v3" class="t" style="left:12.9px;top:783.7px;font:400 13px/13px 'Liberation Sans', sans-serif;color:#b0bec5;transform-origin:0 0;transform:rotate(-90deg) translateY(-50%);letter-spacing:-0.254px;"><u>2</u>: Favorites</span>
<span id="v4" class="t" style="left:12.9px;top:920.7px;font:400 13px/13px 'Liberation Sans', sans-serif;color:#b0bec5;transform-origin:0 0;transform:rotate(-90deg) translateY(-50%);letter-spacing:-0.137px;">Build Variants</span>
<span id="v5" class="t" style="left:1907px;top:158px;font:400 13px/13px 'Liberation Sans', sans-serif;color:#b0bec5;transform-origin:0 0;transform:rotate(90deg) translateY(-50%);letter-spacing:-0.424px;">Gradle</span>
<span id="v6" class="t" style="left:1907.5px;top:716px;font:400 13px/13px 'Liberation Sans', sans-serif;color:#b0bec5;transform-origin:0 0;transform:rotate(90deg) translateY(-50%);letter-spacing:-0.258px;">Device File Explorer</span>
<span id="v7" class="t" style="left:1907.5px;top:889px;font:400 13px/13px 'Liberation Sans', sans-serif;color:#b0bec5;transform-origin:0 0;transform:rotate(90deg) translateY(-50%);letter-spacing:-0.431px;">Emulator</span>
<div class="ed" style="left:462px;top:177px;width:1430px;height:753px">
<div style="left:0;top:81.5px;width:1430px;height:27.5px;background:#1e282d"></div>
<div style="left:68px;top:0;width:1px;height:760px;background:#36454c"></div>
<div style="left:976px;top:0;width:1px;height:760px;background:#35434a"></div>
<div style="left:114px;top:273.5px;width:1px;height:192.5px;background:#34434b"></div>
<div style="left:114px;top:548.5px;width:1px;height:110.0px;background:#34434b"></div>
<div style="left:114px;top:713.5px;width:1px;height:55.0px;background:#34434b"></div>
<div style="left:150px;top:576.0px;width:1px;height:55.0px;background:#34434b"></div>
<span class="t" style="right:1406px;top:7.30px;font:400 15px/15px 'Liberation Mono',monospace;color:#495a64;letter-spacing:-0.6px">1</span>
<span class="t" style="right:1406px;top:34.80px;font:400 15px/15px 'Liberation Mono',monospace;color:#495a64;letter-spacing:-0.6px">2</span>
<span class="t" style="left:76px;top:34.80px;font:400 15px/15px 'Liberation Mono',monospace"><span style="color:#8aaef8">apply</span><span style="color:#c0e48b"> plugin: </span><span style="color:#c0e48b">'com.android.application'</span></span>
<span class="t" style="right:1406px;top:62.30px;font:400 15px/15px 'Liberation Mono',monospace;color:#495a64;letter-spacing:-0.6px">3</span>
<span class="t" style="left:76px;top:62.30px;font:400 15px/15px 'Liberation Mono',monospace"><span style="color:#8aaef8">apply</span><span style="color:#c0e48b"> plugin: </span><span style="color:#c0e48b">'kotlin-android'</span></span>
<span class="t" style="right:1406px;top:89.80px;font:400 15px/15px 'Liberation Mono',monospace;color:#76909d;letter-spacing:-0.6px">4</span>
<span class="t" style="left:76px;top:89.80px;font:400 15px/15px 'Liberation Mono',monospace"><span style="color:#8aaef8">apply</span><span style="color:#c0e48b"> plugin: </span><span style="color:#c0e48b">'kotlin-android-extensions'</span></span>
<span class="t" style="right:1406px;top:117.30px;font:400 15px/15px 'Liberation Mono',monospace;color:#495a64;letter-spacing:-0.6px">5</span>
<span class="t" style="right:1406px;top:144.80px;font:400 15px/15px 'Liberation Mono',monospace;color:#495a64;letter-spacing:-0.6px">6</span>
<span class="t" style="left:76px;top:144.80px;font:400 15px/15px 'Liberation Mono',monospace"><span style="color:#8aaef8">android </span><span style="color:#84d2ec">{</span></span>
<span class="t" style="right:1406px;top:172.30px;font:400 15px/15px 'Liberation Mono',monospace;color:#495a64;letter-spacing:-0.6px">7</span>
<span class="t" style="left:76px;top:172.30px;font:400 15px/15px 'Liberation Mono',monospace"><span style="color:#d8e3e8">    compileSdkVersion </span><span style="color:#f27d74">30</span></span>
<span class="t" style="right:1406px;top:199.80px;font:400 15px/15px 'Liberation Mono',monospace;color:#495a64;letter-spacing:-0.6px">8</span>
<span class="t" style="left:76px;top:199.80px;font:400 15px/15px 'Liberation Mono',monospace"><span style="color:#d8e3e8">    buildToolsVersion </span><span style="color:#c0e48b">"30.0.2"</span></span>
<span class="t" style="right:1406px;top:227.30px;font:400 15px/15px 'Liberation Mono',monospace;color:#495a64;letter-spacing:-0.6px">9</span>
<span class="t" style="right:1406px;top:254.80px;font:400 15px/15px 'Liberation Mono',monospace;color:#495a64;letter-spacing:-0.6px">10</span>
<span class="t" style="left:76px;top:254.80px;font:400 15px/15px 'Liberation Mono',monospace"><span style="color:#d8e3e8">    defaultConfig </span><span style="color:#84d2ec">{</span></span>
<span class="t" style="right:1406px;top:282.30px;font:400 15px/15px 'Liberation Mono',monospace;color:#495a64;letter-spacing:-0.6px">11</span>
<span class="t" style="left:76px;top:282.30px;font:400 15px/15px 'Liberation Mono',monospace"><span style="color:#d8e3e8">        applicationId </span><span style="color:#c0e48b">"com.example.calculator"</span></span>
<span class="t" style="right:1406px;top:309.80px;font:400 15px/15px 'Liberation Mono',monospace;color:#495a64;letter-spacing:-0.6px">12</span>
<span class="t" style="left:76px;top:309.80px;font:400 15px/15px 'Liberation Mono',monospace"><span style="color:#d8e3e8">        minSdkVersion </span><span style="color:#f27d74">23</span></span>
<span class="t" style="right:1406px;top:337.30px;font:400 15px/15px 'Liberation Mono',monospace;color:#495a64;letter-spacing:-0.6px">13</span>
<span class="t" style="left:76px;top:337.30px;font:400 15px/15px 'Liberation Mono',monospace"><span style="color:#d8e3e8">        targetSdkVersion </span><span style="color:#f27d74">30</span></span>
<span class="t" style="right:1406px;top:364.80px;font:400 15px/15px 'Liberation Mono',monospace;color:#495a64;letter-spacing:-0.6px">14</span>
<span class="t" style="left:76px;top:364.80px;font:400 15px/15px 'Liberation Mono',monospace"><span style="color:#d8e3e8">        versionCode </span><span style="color:#f27d74">1</span></span>
<span class="t" style="right:1406px;top:392.30px;font:400 15px/15px 'Liberation Mono',monospace;color:#495a64;letter-spacing:-0.6px">15</span>
<span class="t" style="left:76px;top:392.30px;font:400 15px/15px 'Liberation Mono',monospace"><span style="color:#d8e3e8">        versionName </span><span style="color:#c0e48b">"1.0"</span></span>
<span class="t" style="right:1406px;top:419.80px;font:400 15px/15px 'Liberation Mono',monospace;color:#495a64;letter-spacing:-0.6px">16</span>
<span class="t" style="right:1406px;top:447.30px;font:400 15px/15px 'Liberation Mono',monospace;color:#495a64;letter-spacing:-0.6px">17</span>
<span class="t" style="left:76px;top:447.30px;font:400 15px/15px 'Liberation Mono',monospace"><span style="color:#d8e3e8">        testInstrumentationRunner </span><span style="color:#c0e48b">"androidx.test.runner.AndroidJUnitRunner"</span></span>
<span class="t" style="right:1406px;top:474.80px;font:400 15px/15px 'Liberation Mono',monospace;color:#495a64;letter-spacing:-0.6px">18</span>
<span class="t" style="left:76px;top:474.80px;font:400 15px/15px 'Liberation Mono',monospace"><span style="color:#84d2ec">    }</span></span>
<span class="t" style="right:1406px;top:502.30px;font:400 15px/15px 'Liberation Mono',monospace;color:#495a64;letter-spacing:-0.6px">19</span>
<span class="t" style="right:1406px;top:529.80px;font:400 15px/15px 'Liberation Mono',monospace;color:#495a64;letter-spacing:-0.6px">20</span>
<span class="t" style="left:76px;top:529.80px;font:400 15px/15px 'Liberation Mono',monospace"><span style="color:#d8e3e8">    buildTypes </span><span style="color:#84d2ec">{</span></span>
<span class="t" style="right:1406px;top:557.30px;font:400 15px/15px 'Liberation Mono',monospace;color:#495a64;letter-spacing:-0.6px">21</span>
<span class="t" style="left:76px;top:557.30px;font:400 15px/15px 'Liberation Mono',monospace"><span style="color:#d8e3e8">        release </span><span style="color:#84d2ec">{</span></span>
<span class="t" style="right:1406px;top:584.80px;font:400 15px/15px 'Liberation Mono',monospace;color:#495a64;letter-spacing:-0.6px">22</span>
<span class="t" style="left:76px;top:584.80px;font:400 15px/15px 'Liberation Mono',monospace"><span style="color:#d8e3e8">            minifyEnabled </span><span style="color:#e69a5c">false</span></span>
<span class="t" style="right:1406px;top:612.30px;font:400 15px/15px 'Liberation Mono',monospace;color:#495a64;letter-spacing:-0.6px">23</span>
<span class="t" style="left:76px;top:612.30px;font:400 15px/15px 'Liberation Mono',monospace"><span style="color:#d8e3e8">            proguardFiles getDefaultProguardFile</span><span style="color:#84d2ec">(</span><span style="color:#c0e48b">'proguard-android-optimize.txt'</span><span style="color:#84d2ec">)</span><span style="color:#d8e3e8">, </span><span style="color:#c0e48b">'proguard-rules.pro'</span></span>
<span class="t" style="right:1406px;top:639.80px;font:400 15px/15px 'Liberation Mono',monospace;color:#495a64;letter-spacing:-0.6px">24</span>
<span class="t" style="left:76px;top:639.80px;font:400 15px/15px 'Liberation Mono',monospace"><span style="color:#84d2ec">        }</span></span>
<span class="t" style="right:1406px;top:667.30px;font:400 15px/15px 'Liberation Mono',monospace;color:#495a64;letter-spacing:-0.6px">25</span>
<span class="t" style="left:76px;top:667.30px;font:400 15px/15px 'Liberation Mono',monospace"><span style="color:#84d2ec">    }</span></span>
<span class="t" style="right:1406px;top:694.80px;font:400 15px/15px 'Liberation Mono',monospace;color:#495a64;letter-spacing:-0.6px">26</span>
<span class="t" style="left:76px;top:694.80px;font:400 15px/15px 'Liberation Mono',monospace"><span style="color:#d8e3e8">    compileOptions </span><span style="color:#84d2ec">{</span></span>
<span class="t" style="right:1406px;top:722.30px;font:400 15px/15px 'Liberation Mono',monospace;color:#495a64;letter-spacing:-0.6px">27</span>
<span class="t" style="left:76px;top:722.30px;font:400 15px/15px 'Liberation Mono',monospace"><span style="color:#d8e3e8">        sourceCompatibility </span><span style="color:#ffcb6b">JavaVersion</span><span style="color:#84d2ec">.</span><span style="color:#d8e3e8;font-style:italic">VERSION_1_8</span></span>
<span class="t" style="right:1406px;top:749.80px;font:400 15px/15px 'Liberation Mono',monospace;color:#495a64;letter-spacing:-0.6px">28</span>
<span class="t" style="left:76px;top:749.80px;font:400 15px/15px 'Liberation Mono',monospace"><span style="color:#d8e3e8">        targetCompatibility </span><span style="color:#ffcb6b">JavaVersion</span><span style="color:#84d2ec">.</span><span style="color:#d8e3e8;font-style:italic">VERSION_1_8</span></span>
<svg style="left:62.89999999999998px;top:144.50px" width="11" height="13.5" viewBox="0 0 11 13.5"><path d="M0.5 0.5 H10.5 V7.6 L5.5 13 L0.5 7.6 Z" fill="#263238" stroke="#3e4e56" stroke-width="1"/><path d="M3 6.6 H8" stroke="#3e4e56" stroke-width="1"/></svg>
<svg style="left:62.89999999999998px;top:254.50px" width="11" height="13.5" viewBox="0 0 11 13.5"><path d="M0.5 0.5 H10.5 V7.6 L5.5 13 L0.5 7.6 Z" fill="#263238" stroke="#3e4e56" stroke-width="1"/><path d="M3 6.6 H8" stroke="#3e4e56" stroke-width="1"/></svg>
<svg style="left:62.89999999999998px;top:529.50px" width="11" height="13.5" viewBox="0 0 11 13.5"><path d="M0.5 0.5 H10.5 V7.6 L5.5 13 L0.5 7.6 Z" fill="#263238" stroke="#3e4e56" stroke-width="1"/><path d="M3 6.6 H8" stroke="#3e4e56" stroke-width="1"/></svg>
<svg style="left:62.89999999999998px;top:557.00px" width="11" height="13.5" viewBox="0 0 11 13.5"><path d="M0.5 0.5 H10.5 V7.6 L5.5 13 L0.5 7.6 Z" fill="#263238" stroke="#3e4e56" stroke-width="1"/><path d="M3 6.6 H8" stroke="#3e4e56" stroke-width="1"/></svg>
<svg style="left:62.89999999999998px;top:694.50px" width="11" height="13.5" viewBox="0 0 11 13.5"><path d="M0.5 0.5 H10.5 V7.6 L5.5 13 L0.5 7.6 Z" fill="#263238" stroke="#3e4e56" stroke-width="1"/><path d="M3 6.6 H8" stroke="#3e4e56" stroke-width="1"/></svg>
<svg style="left:62.89999999999998px;top:474.50px" width="11" height="13.5" viewBox="0 0 11 13.5"><path d="M0.5 13 H10.5 V5.9 L5.5 0.5 L0.5 5.9 Z" fill="#263238" stroke="#3e4e56" stroke-width="1"/><path d="M3 6.6 H8" stroke="#3e4e56" stroke-width="1"/></svg>
<svg style="left:62.89999999999998px;top:639.50px" width="11" height="13.5" viewBox="0 0 11 13.5"><path d="M0.5 13 H10.5 V5.9 L5.5 0.5 L0.5 5.9 Z" fill="#263238" stroke="#3e4e56" stroke-width="1"/><path d="M3 6.6 H8" stroke="#3e4e56" stroke-width="1"/></svg>
<svg style="left:62.89999999999998px;top:667.00px" width="11" height="13.5" viewBox="0 0 11 13.5"><path d="M0.5 13 H10.5 V5.9 L5.5 0.5 L0.5 5.9 Z" fill="#263238" stroke="#3e4e56" stroke-width="1"/><path d="M3 6.6 H8" stroke="#3e4e56" stroke-width="1"/></svg>
</div>
<div style="position:absolute;left:462px;top:930px;width:1430px;height:1px;background:#3a4950"></div>
<div style="position:absolute;left:1883px;top:199px;width:8px;height:397px;background:#9e918d;border-radius:4px"></div>
<div style="position:absolute;left:1877px;top:179px;width:13px;height:12px;background:#ffcb6b"></div>
<div style="position:absolute;left:1875px;top:796px;width:17px;height:3px;background:#ffcb6b"></div>
</div></body></html>
